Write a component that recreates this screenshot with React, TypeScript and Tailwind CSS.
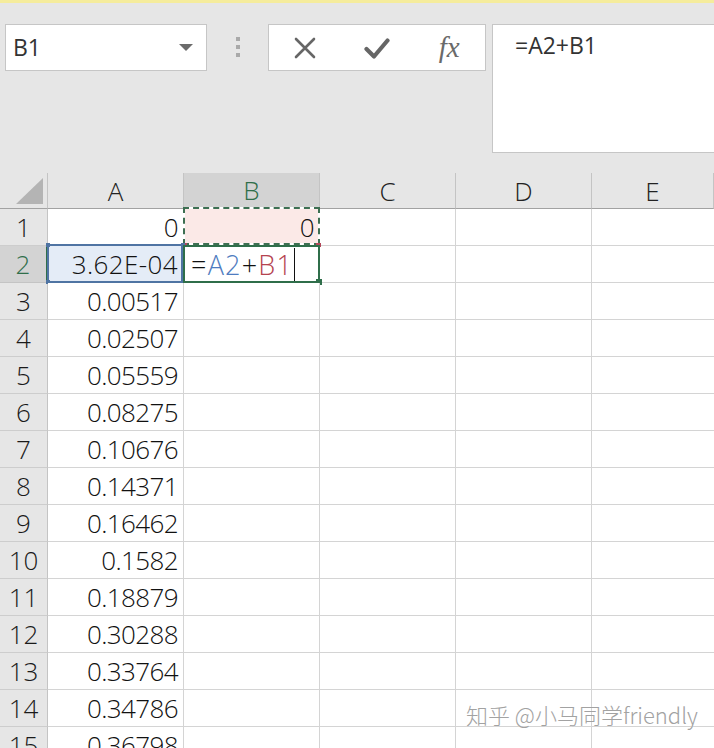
import React from "react";

const FONT = { fontFamily: '"Open Sans", "Liberation Sans", "Noto Sans CJK SC", sans-serif' };

const values: string[] = [
  "0",
  "3.62E-04",
  "0.00517",
  "0.02507",
  "0.05559",
  "0.08275",
  "0.10676",
  "0.14371",
  "0.16462",
  "0.1582",
  "0.18879",
  "0.30288",
  "0.33764",
  "0.34786",
  "0.36798",
];

function Dots() {
  return (
    <div className="w-[61px] flex justify-center">
      <div className="flex flex-col gap-[4px] pt-[13px]">
        <div className="w-[4px] h-[4px] bg-[#a9a9a9]" />
        <div className="w-[4px] h-[4px] bg-[#a9a9a9]" />
        <div className="w-[4px] h-[4px] bg-[#a9a9a9]" />
      </div>
    </div>
  );
}

function Toolbar() {
  return (
    <div className="h-[170px] shrink-0 bg-[#e6e6e6] flex items-start pt-[21px]">
      <div className="ml-[5px] w-[202px] h-[47px] bg-white border border-[#c6c6c6] flex items-center justify-between pl-[7px] pr-[12px]">
        <span className="text-[23px] text-[#333] leading-none">B1</span>
        <svg width="16" height="9" viewBox="0 0 16 9">
          <polygon points="1,1 15,1 8,8" fill="#6b6b6b" />
        </svg>
      </div>
      <Dots />
      <div className="w-[218px] h-[47px] bg-white border border-[#c6c6c6] flex items-center">
        <div className="w-[73px] flex justify-center">
          <svg width="24" height="24" viewBox="0 0 24 24">
            <path d="M3 3 L21 21 M21 3 L3 21" stroke="#666" strokeWidth="2.6" strokeLinecap="round" fill="none" />
          </svg>
        </div>
        <div className="w-[72px] flex justify-center">
          <svg width="26" height="24" viewBox="0 0 26 24">
            <path d="M2.5 13 L10 20.5 L23.5 4.5" stroke="#666" strokeWidth="4.2" strokeLinecap="round" strokeLinejoin="round" fill="none" />
          </svg>
        </div>
        <div className="w-[72px] flex justify-center">
          <span
            className="text-[29px] italic text-[#6a6a6a] leading-none"
            style={{ fontFamily: '"Liberation Serif", "DejaVu Serif", serif' }}
          >
            fx
          </span>
        </div>
      </div>
      <div className="ml-[6px] flex-1 h-[129px] bg-white border border-r-0 border-[#c6c6c6] pl-[22px] pt-[9px]">
        <span className="text-[23px] text-[#333] leading-none">=A2+B1</span>
      </div>
    </div>
  );
}

function Header() {
  const cols = ["A", "B", "C", "D", "E"];
  return (
    <div className="grid grid-cols-[48px_136px_136px_136px_136px_1fr] h-[36px] shrink-0 bg-[#e6e6e6]">
      <div className="relative border-r border-b border-r-[#c4c4c4] border-b-[#a2a2a2]">
        <svg width="30" height="28" viewBox="0 0 30 28" className="absolute left-[15px] top-[4px]">
          <polygon points="28,1 28,27 1,27" fill="#b4b4b4" />
        </svg>
      </div>
      {cols.map((c) =>
        c === "B" ? (
          <div
            key={c}
            className="bg-[#d3d3d3] border-r border-r-[#c4c4c4] border-b-2 border-b-[#2f6e4a] flex items-center justify-center text-[26px] font-light text-[#2f6e4a] leading-none"
          >
            {c}
          </div>
        ) : (
          <div
            key={c}
            className="border-r border-b border-r-[#c4c4c4] border-b-[#a2a2a2] flex items-center justify-center text-[26px] font-light text-[#222] leading-none"
          >
            {c}
          </div>
        )
      )}
    </div>
  );
}

function Row({ n, v }: { n: number; v: string }) {
  const isRow2 = n === 2;
  const isRow1 = n === 1;
  return (
    <div className="grid grid-cols-[48px_136px_136px_136px_136px_1fr] h-[37px] shrink-0">
      {isRow2 ? (
        <div className="bg-[#d3d3d3] border-b border-b-[#c4c4c4] border-r-2 border-r-[#2f6e4a] flex items-center justify-center text-[26px] font-light text-[#2f6e4a] leading-none">
          {n}
        </div>
      ) : (
        <div className="bg-[#e6e6e6] border-b border-r border-b-[#cdcdcd] border-r-[#c4c4c4] flex items-center justify-center text-[26px] font-light text-[#1a1a1a] leading-none">
          {n}
        </div>
      )}
      <div
        className={
          "relative border-b border-r border-[#d4d4d4] flex items-center justify-end pr-[5px] text-[26px] font-light text-[#111] leading-none " +
          (isRow2 ? "bg-[#e4ecf7] tracking-[0.4px]" : "bg-white tracking-[-0.6px]")
        }
      >
        <span className="relative">{v}</span>
        {isRow2 && (
          <>
            <div className="absolute -left-[1px] -top-[2px] right-0 -bottom-[1px] border-2 border-[#4f74a3] pointer-events-none" />
            <div className="absolute -left-[2px] -top-[3px] w-[4px] h-[4px] bg-[#4f74a3]" />
            <div className="absolute -right-[2px] -top-[3px] w-[4px] h-[4px] bg-[#4f74a3]" />
            <div className="absolute -left-[2px] -bottom-[2px] w-[4px] h-[4px] bg-[#4f74a3]" />
            <div className="absolute -right-[2px] -bottom-[2px] w-[4px] h-[4px] bg-[#4f74a3]" />
          </>
        )}
      </div>
      <div
        className={
          "relative border-b border-r border-[#d4d4d4] flex items-center text-[26px] font-light leading-none " +
          (isRow1 ? "bg-[#fbe9e7] justify-end pr-[5px] text-[#111] tracking-[-0.6px]" : "bg-white")
        }
      >
        {isRow1 && (
          <>
            <div className="absolute -left-[1px] -top-[2px] -right-[1px] bottom-[0px] border-2 border-white" />
            <div className="absolute -left-[1px] -top-[2px] -right-[1px] bottom-[0px] border-2 border-dashed border-[#3d6f52]" />
            <span className="relative">0</span>
            <div className="absolute -left-[2px] -bottom-[2px] w-[5px] h-[4px] bg-[#b2475a]" />
            <div className="absolute -right-[2px] -bottom-[2px] w-[5px] h-[4px] bg-[#b2475a]" />
          </>
        )}
        {isRow2 && (
          <>
            <div className="absolute -left-[1px] -top-[1px] -right-[1px] -bottom-[1px] border-2 border-[#2f6e4a]" />
            <div className="relative flex items-center pl-[7px] text-[27px] tracking-[1.2px]">
              <span className="text-[#111]">=</span>
              <span className="text-[#4f7cc0]">A2</span>
              <span className="text-[#111]">+</span>
              <span className="text-[#b5434f]">B1</span>
              <span className="ml-[1px] w-[1px] h-[33px] bg-[#111]" />
            </div>
            <div className="absolute -right-[3px] -bottom-[3px] w-[6px] h-[6px] bg-[#2f6e4a]" />
          </>
        )}
      </div>
      <div className="border-b border-r border-[#d4d4d4] bg-white" />
      <div className="border-b border-r border-[#d4d4d4] bg-white" />
      <div className="border-b border-[#d4d4d4] bg-white" />
    </div>
  );
}

export default function App() {
  return (
    <div className="relative w-[714px] h-[748px] overflow-hidden bg-white flex flex-col" style={FONT}>
      <div className="h-[3px] bg-[#f5ec9c] shrink-0" />
      <Toolbar />
      <Header />
      {values.map((v, i) => (
        <Row key={i} n={i + 1} v={v} />
      ))}
      <div
        className="absolute left-[466px] top-[703px] text-[22px] font-light text-[#a2a2a2] leading-none whitespace-nowrap"
        style={{ fontFamily: '"Noto Sans CJK SC", "Noto Sans", sans-serif', textShadow: "0 0 1px #fff" }}
      >
        知乎 @小马同学friendly
      </div>
    </div>
  );
}
